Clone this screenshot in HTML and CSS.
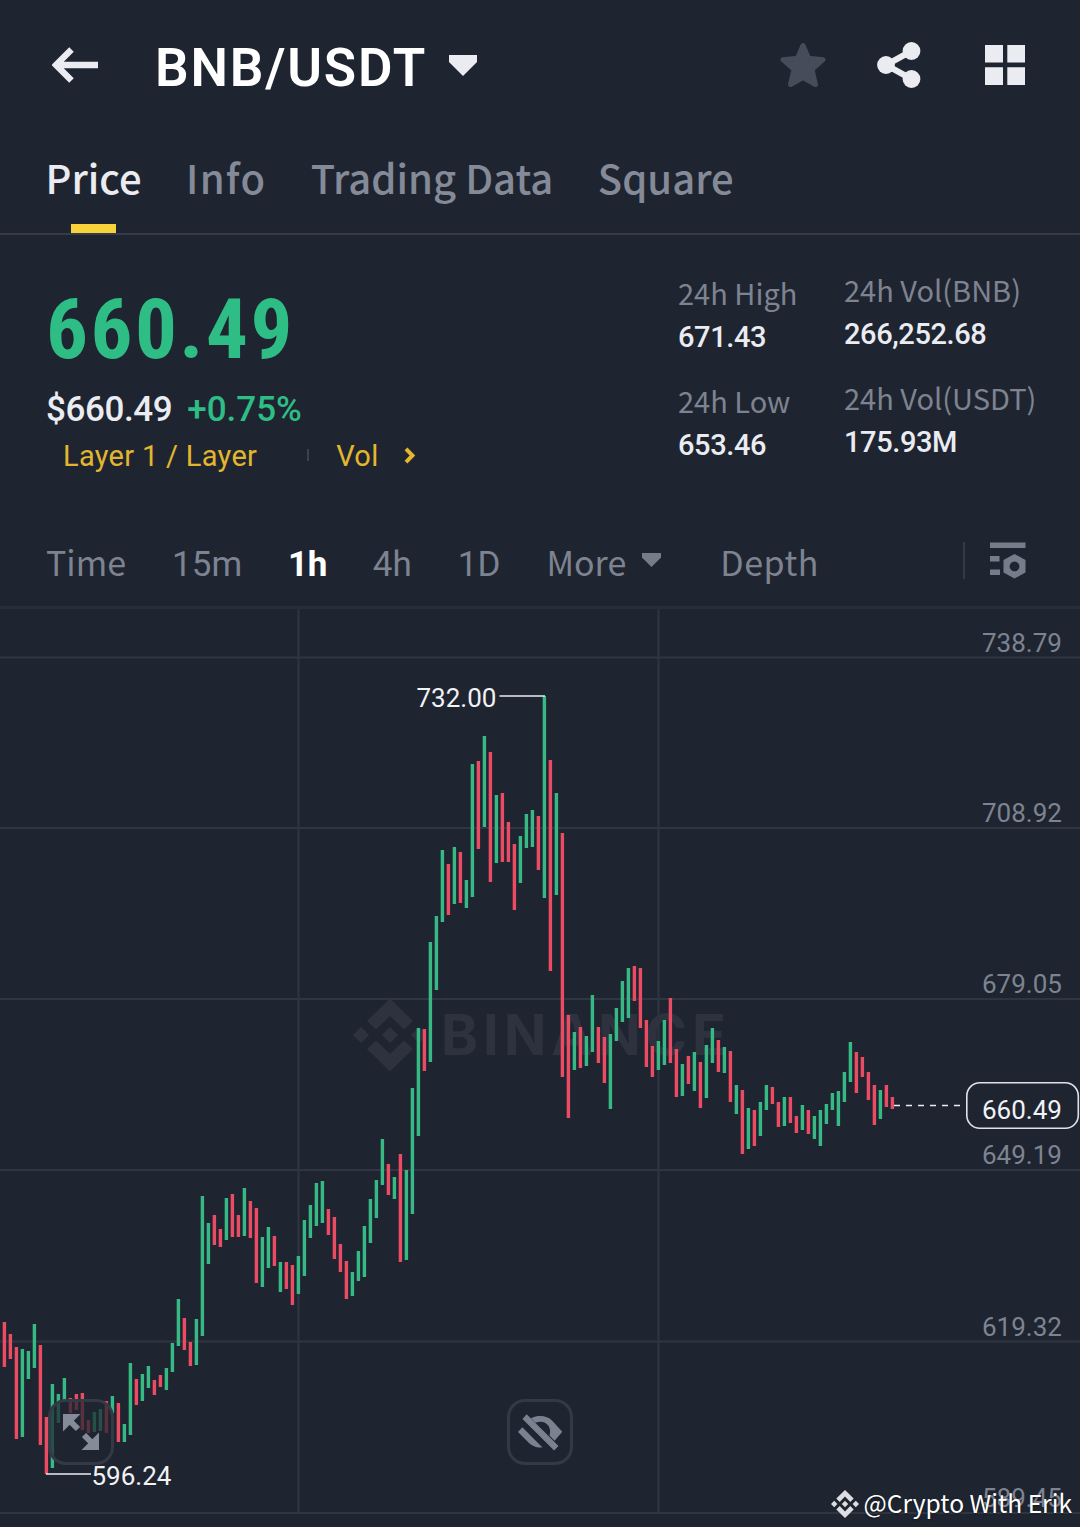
FILE: index.html
```
<!DOCTYPE html>
<html lang="en">
<head>
    <meta charset="UTF-8">
    <meta name="viewport" content="width=device-width, initial-scale=1.0">
    <title>BNB/USDT</title>
    <link rel="stylesheet" href="styles.css">
</head>
<body>

    <header class="header">
        <svg class="back" width="46" height="36" viewBox="0 0 46 36">
            <path d="M19.5 2.5L4 18l15.5 15.5M4 18h42" fill="none" stroke="#eaecf2" stroke-width="6.4"/>
        </svg>
        <h1 class="pair">BNB/USDT</h1>
        <svg class="caret" width="28" height="21" viewBox="0 0 28 21">
            <path d="M0 0h28v7L14 21 0 7z" fill="#eaecf2"/>
        </svg>
        <div class="actions">
            <svg width="46" height="46" viewBox="0 0 46 46">
                <path d="M23 3.5l5.5 12.7 14.5 1.5-11 9.8 3.5 15L23 35.5 10.5 42.5l3.5-15L3 17.7l14.5-1.5z" fill="#464c5a" stroke="#464c5a" stroke-width="5" stroke-linejoin="round"/>
            </svg>
            <svg width="44" height="46" viewBox="0 0 44 46">
                <path d="M34.5 9L9 23l25.5 14" fill="none" stroke="#eaecf2" stroke-width="6"/>
                <g fill="#eaecf2">
                    <circle cx="34.5" cy="9" r="8.9"/>
                    <circle cx="9" cy="23" r="8.9"/>
                    <circle cx="34.5" cy="37" r="8.9"/>
                </g>
            </svg>
            <svg width="40" height="40" viewBox="0 0 40 40">
                <path d="M0 0h18v17.5H0zM22.3 0H40v17.5H22.3zM0 22.2h18V40H0zM22.3 22.2H40V40H22.3z" fill="#eaecf2"/>
            </svg>
        </div>
    </header>

    <nav class="tabs">
        <div class="tab active">Price</div>
        <div class="tab info">Info</div>
        <div class="tab">Trading Data</div>
        <div class="tab">Square</div>
    </nav>

    <section class="summary">
        <div class="quote">
            <div class="last-price">660.49</div>
            <div class="fiat">
                <span>$660.49</span>
                <span class="up">+0.75%</span>
            </div>
            <div class="tags">
                <span>Layer 1 / Layer</span>
                <i class="sep"></i>
                <span>Vol</span>
                <svg width="11" height="17" viewBox="0 0 11 17">
                    <path d="M2 1.8l6.5 6.7L2 15.2" fill="none" stroke="#e3b62f" stroke-width="4"/>
                </svg>
            </div>
        </div>
        <div class="stats range">
            <div class="stat"><label>24h High</label><b>671.43</b></div>
            <div class="stat"><label>24h Low</label><b>653.46</b></div>
        </div>
        <div class="stats volume">
            <div class="stat"><label>24h Vol(BNB)</label><b>266,252.68</b></div>
            <div class="stat"><label>24h Vol(USDT)</label><b>175.93M</b></div>
        </div>
    </section>

    <div class="intervals">
        <span class="word">Time</span>
        <span>15m</span>
        <span class="active">1h</span>
        <span>4h</span>
        <span>1D</span>
        <span class="word more">More
            <svg width="19" height="14" viewBox="0 0 19 14"><path d="M0 0h19v4.5L9.5 14 0 4.5z" fill="#777c8b"/></svg>
        </span>
        <span class="word depth">Depth</span>
        <div class="settings">
            <svg width="36" height="37" viewBox="0 0 36 37" fill="#777c8b">
                <path d="M0 0.5h35.5v5.5H0zM0 14h9.5v5.5H0zM0 27.5h10V33H0z"/>
                <path fill-rule="evenodd" d="M24.5 12l11 6v12.5l-11 6-11-6V18zM24.5 19.5a4.9 4.9 0 1 0 0.01 0z"/>
            </svg>
        </div>
    </div>

    <main class="chart">
        <svg id="candles" width="1080" height="918" viewBox="0 609 1080 918">
            <g id="grid"></g>

            <!-- brand mark behind the bars -->
            <g class="brand">
                <path d="M390 998.5l23 22.5-9 8.5-14-13.5-14 13.5-9-8.5zM390 1071.5l23-22.5-9-8.5-14 13.5-14-13.5-9 8.5zM353 1035l8-8 8 8-8 8zM411 1035l8-8 8 8-8 8zM382 1035l8-8 8 8-8 8z"/>
                <text x="441" y="1055" textLength="285">BINANCE</text>
            </g>

            <g id="bars"></g>
            <g id="axis"></g>

            <!-- high / low markers -->
            <path class="marker" d="M499.5 696H545M46 1474H91"/>
            <text class="extreme" x="416.5" y="706.5">732.00</text>
            <text class="extreme" x="91.5" y="1484.5">596.24</text>

            <!-- last price -->
            <path class="last-line" d="M894 1105.5H962"/>
            <rect class="pill" x="966.8" y="1082.8" width="111.5" height="45.5" rx="13"/>
            <text class="extreme" x="982" y="1118.5">660.49</text>
        </svg>

        <button class="tool expand" aria-label="Full screen">
            <svg width="36" height="36" viewBox="0 0 36 36" fill="#858b98">
                <path d="M0 0h17.5L0 17.5zM36 36H18.5L36 18.5z"/>
                <path d="M5 5l10 10M31 31L21 21" stroke="#858b98" stroke-width="6"/>
            </svg>
        </button>
        <button class="tool hide" aria-label="Hide">
            <svg width="46" height="38" viewBox="0 0 46 38" fill="#7b8190">
                <path d="M5.5 6L9.7 1.3 41.5 33l-4.4 4.5z"/>
                <path d="M1 19l4.3-4.8L25.5 34.5C19 35 14.5 32.5 11.5 29.5z"/>
                <path d="M14 5.2C22 1.5 30.5 3 35 7.5L45.3 18.8 37.6 27.7 32.5 22.5C35.500 13.500 28 6 18.500 9.700z"/>
            </svg>
        </button>

        <div class="credit">
            <svg width="28" height="28" viewBox="0 0 74 74" fill="#dcdee4">
                <path d="M37 0l23 22.5-9 9L37 17.5l-14 14-9-9zM37 74l23-22.5-9-9-14 14-14-14-9 9zM0 37l8.5-8.5L17 37l-8.5 8.5zM57 37l8.5-8.5L74 37l-8.5 8.5zM28.5 37l8.5-8.5 8.5 8.5-8.5 8.5z"/>
            </svg>
            <span>@Crypto With Erik</span>
        </div>
    </main>

    <script src="chart.js"></script>
</body>
</html>
```

FILE: styles.css
```
* {
    box-sizing: border-box;
}

body {
    margin: 0;
    width: 1080px;
    height: 1527px;
    overflow: hidden;
    background: #1f2530;
    color: #eaecf2;
    font-family: 'Roboto', 'Noto Sans', sans-serif;
}

svg {
    display: block;
    flex: none;
}

/* header */
.header {
    display: flex;
    align-items: center;
    height: 130px;
    padding: 0 55px 0 52px;
}

.pair {
    margin: 5px 0 0 57px;
    font-size: 53px;
    font-weight: 600;
    line-height: 60px;
    letter-spacing: 1.8px;
    color: #fff;
}

.caret {
    margin-left: 22px;
}

.actions {
    display: flex;
    align-items: center;
    margin-left: auto;
}

.actions svg:nth-child(2) {
    margin: 0 64px 0 51px;
}

/* tabs */
.tabs {
    display: flex;
    gap: 44.5px;
    height: 105px;
    padding-left: 45.5px;
    border-bottom: 2px solid #363b47;
}

.tab {
    position: relative;
    font-family: 'Noto Sans CJK SC', sans-serif;
    font-size: 40px;
    font-weight: 500;
    line-height: 94px;
    color: #858a98;
}

.tab.info {
    letter-spacing: 1.2px;
}

.tab.active {
    color: #eaecf2;
}

.tab.active::after {
    content: '';
    position: absolute;
    left: 25.5px;
    bottom: 0;
    width: 45px;
    height: 9px;
    background: #f8d33a;
}

/* price summary */
.summary {
    display: flex;
    height: 285px;
}

.quote {
    width: 678px;
    padding: 43px 0 0 46px;
}

.last-price {
    font-size: 83px;
    font-weight: 700;
    font-stretch: 85%;
    line-height: 103px;
    letter-spacing: 2.5px;
    color: #2ebd85;
}

.fiat {
    display: flex;
    gap: 15px;
    font-size: 35px;
    font-weight: 500;
    line-height: 58px;
    letter-spacing: -0.4px;
}

.fiat .up {
    letter-spacing: 0;
    color: #2ebd85;
}

.tags {
    display: flex;
    align-items: center;
    padding-left: 17px;
    font-size: 29px;
    line-height: 35px;
    letter-spacing: 0.3px;
    color: #e3b62f;
}

.sep {
    width: 2px;
    height: 12px;
    margin: 0 27px 3px 50px;
    background: #3b414d;
}

.tags svg {
    margin: 0 0 2px 25px;
}

.stats {
    display: flex;
    flex-direction: column;
    gap: 24px;
    padding-top: 39px;
    font-size: 29px;
    line-height: 42px;
}

.range {
    width: 166px;
}

.volume {
    padding-top: 36px;
}

.stat {
    display: flex;
    flex-direction: column;
}

.stat label {
    height: 42px;
    font-family: 'Noto Sans CJK SC', sans-serif;
    line-height: 36px;
    color: #7e8391;
}

.stat b {
    font-weight: 500;
    letter-spacing: -0.4px;
}

/* chart intervals */
.intervals {
    display: flex;
    align-items: center;
    gap: 46px;
    height: 89px;
    padding: 2px 54px 0 46px;
    border-bottom: 3px solid #282e39;
    font-size: 35px;
    color: #7e8391;
}

.intervals .active {
    font-weight: 700;
    letter-spacing: -0.5px;
    color: #fff;
}

.word {
    margin-bottom: 5px;
    font-family: 'Noto Sans CJK SC', sans-serif;
    font-size: 34px;
}

.more {
    display: flex;
    align-items: center;
    gap: 16px;
    margin-right: 13px;
}

.more svg {
    margin-bottom: 3px;
}

.depth {
    letter-spacing: 0.5px;
}

.settings {
    display: flex;
    align-items: center;
    height: 37px;
    margin: 0 0 8px auto;
    padding-left: 25px;
    border-left: 2px solid #343a46;
}

/* chart */
.chart {
    position: relative;
    height: 918px;
}

#grid path {
    stroke: #303641;
    stroke-width: 2;
}

.brand {
    fill: #2d323e;
}

.brand text {
    font-family: 'Inter', sans-serif;
    font-size: 56px;
    font-weight: 700;
}

#bars path {
    fill: none;
    stroke-width: 3.4;
}

#bars .rise {
    stroke: #36b984;
}

#bars .fall {
    stroke: #ec4c63;
}

#axis text,
.extreme {
    font-size: 26px;
}

#axis text {
    fill: #7e8391;
}

.extreme {
    fill: #f1f2f6;
}

.marker {
    stroke: #eaecf2;
    stroke-width: 1.6;
}

.last-line {
    stroke: #eaecf2;
    stroke-width: 1.5;
    stroke-dasharray: 6 6;
}

.pill {
    fill: #1f2530;
    stroke: #dfe1e8;
    stroke-width: 1.6;
}

/* floating buttons over the chart */
.tool {
    position: absolute;
    bottom: 62px;
    display: flex;
    align-items: center;
    justify-content: center;
    width: 66px;
    height: 66px;
    padding: 0;
    border: 3px solid #343a45;
    border-radius: 18px;
    background: rgba(31, 37, 48, 0.72);
}

.expand {
    left: 48px;
}

.hide {
    left: 507px;
}

.credit {
    position: absolute;
    right: 8px;
    bottom: 8px;
    display: flex;
    align-items: center;
    gap: 4px;
    font-family: 'Noto Sans CJK SC', sans-serif;
    font-size: 24.6px;
    line-height: 34px;
    color: #fff;
    text-shadow: 0 1px 2px rgba(0, 0, 0, 0.5);
}

.credit span {
    margin-top: -4px;
}
```

FILE: chart.js
```
// one entry per hour: direction, top, bottom
const bars = `
R1322-1367 R1334-1359 R1347-1439 G1349-1437 G1351-1379 G1324-1368 R1345-1445 R1417-1474 G1384-1468 G1394-1423
G1378-1402 R1398-1413 R1394-1410 R1393-1430 R1420-1433 G1412-1432 G1409-1431 R1401-1433 G1396-1413 R1403-1442
G1424-1442 G1363-1435 R1379-1405 G1374-1401 G1366-1388 R1380-1395 R1375-1387 G1368-1390 G1343-1372 G1299-1346
R1318-1350 R1342-1366 G1319-1365 G1196-1336 G1223-1264 R1215-1245 R1229-1247 G1198-1240 R1194-1237 R1215-1237
G1188-1236 R1201-1238 R1208-1283 G1237-1287 G1227-1268 R1236-1266 G1262-1292 R1262-1289 R1265-1305 G1256-1294
G1220-1276 G1205-1238 G1183-1226 G1181-1223 R1209-1235 R1217-1259 R1244-1272 R1261-1299 G1272-1296 G1251-1281
G1226-1277 G1199-1243 G1180-1218 G1139-1185 R1164-1195 G1177-1199 R1154-1262 G1170-1260 G1088-1214 G1028-1136
R1029-1071 G942-1062 G916-990 G850-922 R864-915 G847-904 R852-903 G880-908 G764-897 R761-849
G736-827 R752-882 G795-863 R793-862 R822-862 R844-910 G836-883 G814-848 G810-847 R816-870
G696-898 R760-971 G793-895 R833-1077 R1015-1118 G1032-1070 R1027-1068 G1036-1066 G995-1052 R1027-1063
R1037-1083 G1034-1109 G1008-1041 G981-1022 G968-1018 R966-1001 R968-1028 R1020-1067 R1046-1077 G1041-1070
G1020-1065 R998-1063 R1049-1097 G1064-1096 R1056-1084 G1052-1091 R1062-1108 G1045-1098 G1028-1063 R1040-1072
G1047-1073 R1051-1102 G1085-1114 R1090-1154 G1108-1149 R1110-1146 G1102-1136 G1085-1110 R1087-1104 R1102-1127
G1097-1126 R1097-1123 R1116-1133 G1105-1130 R1110-1134 G1116-1139 G1110-1146 G1104-1124 G1093-1110 G1091-1126
G1072-1102 G1042-1082 R1052-1093 R1057-1077 R1072-1100 R1085-1125 G1090-1119 R1085-1107 R1097-1109
`.trim().split(/\s+/);

const prices = ['738.79', '708.92', '679.05', '649.19', '619.32', '589.45'];
const lines = [657.5, 828, 999, 1170, 1341.5, 1513];

const step = 6;
const startX = 4.4;

let rise = '';
let fall = '';
bars.forEach((bar, i) => {
    const [top, bottom] = bar.slice(1).split('-');
    const d = `M${(startX + i * step).toFixed(1)} ${top}V${bottom}`;
    if (bar[0] === 'G') {
        rise += d;
    } else {
        fall += d;
    }
});
document.getElementById('bars').innerHTML =
    `<path class="rise" d="${rise}"/><path class="fall" d="${fall}"/>`;

document.getElementById('grid').innerHTML =
    lines.map(y => `<path d="M0 ${y}H1080"/>`).join('') +
    '<path d="M298.5 609V1512"/><path d="M658.5 609V1512"/>';

document.getElementById('axis').innerHTML =
    prices.map((p, i) => `<text x="982" y="${lines[i] - 6}">${p}</text>`).join('');
```
